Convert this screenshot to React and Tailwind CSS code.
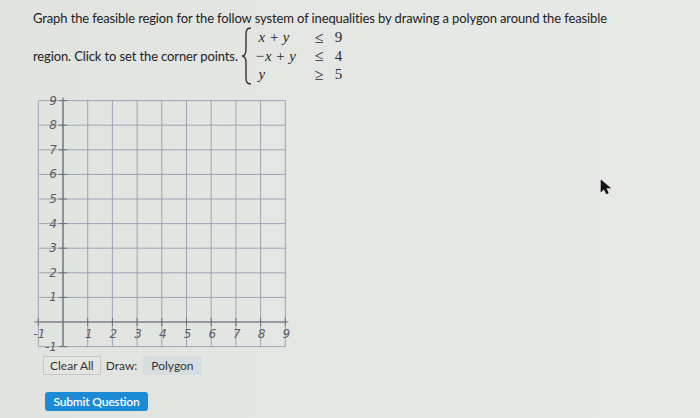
import React from "react";

const U = 24.7;
const OX = 43;
const OY = 231;
const X = (i) => OX + U * i;
const Y = (j) => OY - 24.6 * j;

function Graph() {
  const ints = [-1, 0, 1, 2, 3, 4, 5, 6, 7, 8, 9];
  const lab = { fontSize: "12", fontStyle: "italic", fill: "#5a5e66", fontFamily: "'DejaVu Sans', sans-serif" };
  return (
    <svg width="280" height="262" viewBox="0 0 280 262" className="block">
      {ints.map((i) => (
        <line key={"v" + i} x1={X(i)} y1={Y(9)} x2={X(i)} y2={Y(-1)} stroke="#9aa5b4" strokeWidth="1" />
      ))}
      {ints.map((j) => (
        <line key={"h" + j} x1={X(-1)} y1={Y(j)} x2={X(9)} y2={Y(j)} stroke="#9aa5b4" strokeWidth="1" />
      ))}
      <line x1={X(-1) - 4} y1={Y(0)} x2={X(9) + 3} y2={Y(0)} stroke="#6b7078" strokeWidth="1.2" />
      <line x1={X(0)} y1={Y(9) - 3} x2={X(0)} y2={Y(-1)} stroke="#6b7078" strokeWidth="1.2" />
      {ints.filter((i) => i !== 0).map((i) => (
        <line key={"tx" + i} x1={X(i)} y1={Y(0) - 4} x2={X(i)} y2={Y(0) + 4} stroke="#6b7078" strokeWidth="1" />
      ))}
      {ints.filter((j) => j !== 0).map((j) => (
        <line key={"ty" + j} x1={X(0) - 4} y1={Y(j)} x2={X(0) + 4} y2={Y(j)} stroke="#6b7078" strokeWidth="1" />
      ))}
      {ints.filter((i) => i !== 0).map((i) => (
        <text key={"lx" + i} x={X(i) + 1} y={Y(0) + 16} textAnchor="middle" {...lab}>
          {i}
        </text>
      ))}
      {ints.filter((j) => j > 0).map((j) => (
        <text key={"ly" + j} x={X(0) - 6} y={Y(j) + 4} textAnchor="end" {...lab}>
          {j}
        </text>
      ))}
      <text x={X(0) - 6} y={Y(-1) + 4} textAnchor="end" {...lab}>
        -1
      </text>
    </svg>
  );
}

function Row({ left, rel, num }) {
  return (
    <div className="flex items-center h-[18.5px]">
      <div className="w-[60px]">{left}</div>
      <div className="w-[20px] not-italic text-[16px]">{rel}</div>
      <div className="not-italic">{num}</div>
    </div>
  );
}

export default function App() {
  const mathFont = { fontFamily: "'Liberation Serif', 'DejaVu Serif', serif" };
  return (
    <div
      className="relative w-[700px] h-[418px] overflow-hidden bg-gradient-to-r from-[#e1e3df] to-[#e8eae8] text-[#222]"
      style={{ fontFamily: "Lato, 'Open Sans', sans-serif" }}
    >
      <div className="pt-[10px] pl-[33px] text-[13px] leading-[16px] tracking-[-0.12px]">
        Graph the feasible region for the follow system of inequalities by drawing a polygon around the feasible
      </div>
      <div className="flex items-center pl-[33px] mt-[1px]">
        <div className="text-[13px] leading-[16px] tracking-[-0.12px]">region. Click to set the corner points.</div>
        <svg width="11" height="58" viewBox="0 0 11 58" className="ml-[3px] block">
          <path d="M10 1 C5 1 5 4 5 10 L5 22 C5 27 3.5 29 1 29 C3.5 29 5 31 5 36 L5 48 C5 54 5 57 10 57" fill="none" stroke="#333" strokeWidth="1.4" />
        </svg>
        <div className="ml-[3px] text-[15px] italic text-[#2a2a2a]" style={mathFont}>
          <Row left={<span>&nbsp;x + y</span>} rel="≤" num="9" />
          <Row left={<span>−x + y</span>} rel="≤" num="4" />
          <Row left={<span>&nbsp;y</span>} rel="≥" num="5" />
        </div>
      </div>
      <div className="ml-[20px] mt-[6px]">
        <Graph />
      </div>
      <div className="flex items-center ml-[43px] mt-[3px] text-[12px] text-[#333]">
        <div className="h-[19px] px-[6px] flex items-center border border-[#c3c6c4] bg-[#e3e5e2]">Clear All</div>
        <div className="ml-[5px]">Draw:</div>
        <div className="ml-[6px] h-[19px] px-[7px] flex items-center bg-[#d5dde0] border border-[#d5dde0]">Polygon</div>
      </div>
      <div className="ml-[45px] mt-[17px] w-[103px] h-[19px] flex items-center justify-center rounded-[3px] bg-[#1c8ad4] text-white text-[12px] font-semibold tracking-[-0.2px]">
        Submit Question
      </div>
      <svg width="12" height="16" viewBox="0 0 12 16" className="absolute left-[600px] top-[179px]">
        <path d="M1 1 L1 13 L4 10 L6.5 15 L8.3 14 L6 9 L10.5 9 Z" fill="#111" stroke="#111" strokeWidth="0.6" />
      </svg>
    </div>
  );
}
